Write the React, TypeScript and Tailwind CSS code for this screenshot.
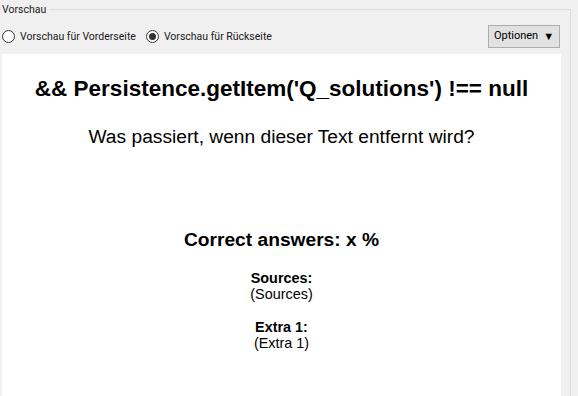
import React from "react";

function Radio({ checked, label }: { checked?: boolean; label: string }) {
  return (
    <label className="flex items-center gap-[5px]">
      <span className="flex h-[13px] w-[13px] items-center justify-center rounded-full border border-[#333333] bg-white">
        {checked ? <span className="h-[7px] w-[7px] rounded-full bg-[#333333]" /> : null}
      </span>
      <span className="text-[#1a1a1a]">{label}</span>
    </label>
  );
}

export default function App() {
  return (
    <div className="h-[396px] w-full overflow-hidden bg-[#f0f0f0] font-['Roboto',sans-serif] text-[10.5px] text-black">
      <fieldset className="m-0 mr-[7px] min-w-0 border-t border-r border-[#dcdcdc] p-0">
        <legend className="ml-[1px] pl-[1px] pr-[3px] leading-[19px] text-[#1a1a1a]">Vorschau</legend>
        <div className="mt-[6px] mr-[10px] flex h-[23px] items-center justify-between pl-[2px]">
          <div className="flex items-center gap-[10px]">
            <Radio label="Vorschau für Vorderseite" />
            <Radio checked label="Vorschau für Rückseite" />
          </div>
          <button className="flex h-[23px] w-[72px] items-center justify-center gap-[5px] border border-[#adadad] bg-[#e1e1e1] text-[11px] text-black">
            <span>Optionen</span>
            <span className="text-[11px] leading-none">▼</span>
          </button>
        </div>
        <div className="mt-[6px] ml-[2px] mr-[9px] flex h-[360px] flex-col items-center bg-white font-['Liberation_Sans',Arial,sans-serif] text-black">
          <div className="mt-[21px] text-[22.5px] font-bold leading-[27px] whitespace-nowrap">
            &amp;&amp; Persistence.getItem('Q_solutions') !== null
          </div>
          <div className="mt-[23px] text-[19.2px] leading-[24px] whitespace-nowrap">
            Was passiert, wenn dieser Text entfernt wird?
          </div>
          <div className="mt-[79px] text-[19.2px] font-bold leading-[24px]">Correct answers: x %</div>
          <div className="mt-[18px] text-[14.4px] leading-[16px] font-bold">Sources:</div>
          <div className="text-[14.4px] leading-[16px]">(Sources)</div>
          <div className="mt-[17px] text-[14.4px] leading-[16px] font-bold">Extra 1:</div>
          <div className="text-[14.4px] leading-[16px]">(Extra 1)</div>
        </div>
      </fieldset>
    </div>
  );
}
